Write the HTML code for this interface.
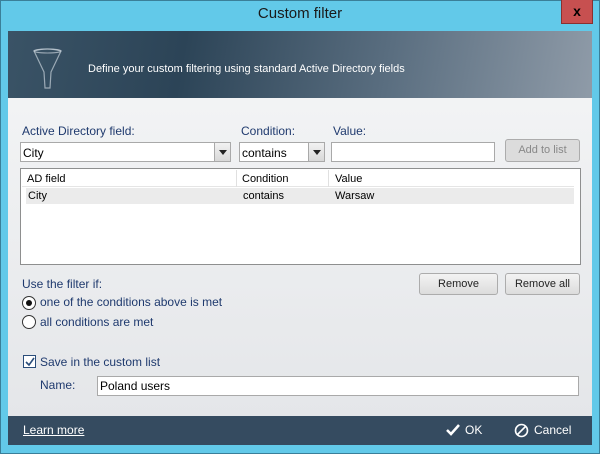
<!DOCTYPE html>
<html><head><style>
*{margin:0;padding:0;box-sizing:border-box}
body{width:600px;height:454px;background:#62c9e9;font-family:"Liberation Sans",sans-serif;font-size:12px;position:relative;overflow:hidden}
.frame{position:absolute;left:0;top:0;width:600px;height:454px;border:1px solid #3a7f99}
.title{position:absolute;left:0;top:5px;width:600px;text-align:center;font-size:15px;color:#1a1a1a}
.close{position:absolute;left:561px;top:0;width:32px;height:24px;background:#c75050;border:1px solid #8a3030;border-top:none;color:#000;font-weight:bold;text-align:center;line-height:22px;font-size:14px}
.content{position:absolute;left:8px;top:31px;width:584px;height:414px;background:linear-gradient(#f5f6f7,#e3e5e8)}
.header{position:absolute;left:8px;top:31px;width:584px;height:67px;background:linear-gradient(100deg,#3a5366 0%,#2c4457 30%,#5a6e80 65%,#8f9ba8 100%)}
.header span{position:absolute;left:80px;top:32px;color:#fff;font-size:11px}
.a{position:absolute}
.lbl{color:#1f3a6e;font-size:12px}
.box{background:#fff;border:1px solid #a9a9a9}
.dd{position:absolute;right:0;top:0;width:16px;height:18px;background:linear-gradient(#f2f2f2,#d8d8d8);border-left:1px solid #a9a9a9}
.dd:after{content:"";position:absolute;left:4px;top:7px;border:4px solid transparent;border-top:5px solid #222}
.btn{background:linear-gradient(#f3f3f3,#dcdcdc);border:1px solid #acacac;border-radius:3px;text-align:center;color:#222;font-size:11px}
.footer{position:absolute;left:8px;top:416px;width:584px;height:29px;background:#354b60;color:#fff}
</style></head><body>
<div class="frame"></div>
<div class="title">Custom filter</div>
<div class="close">x</div>
<div class="content"></div>
<div class="header"><svg class="a" style="left:25px;top:17px" width="40" height="46"><path d="M1 3 Q14 -1 28 3 L18 24 L17 40 L12 40 L11 24 Z" fill="none" stroke="#c8d2da" stroke-width="1.2" opacity=".7"/><ellipse cx="14.5" cy="3" rx="13.5" ry="2" fill="none" stroke="#c8d2da" opacity=".7"/></svg><span>Define your custom filtering using standard Active Directory fields</span></div>

<div class="a lbl" style="left:22px;top:124px">Active Directory field:</div>
<div class="a lbl" style="left:241px;top:124px">Condition:</div>
<div class="a lbl" style="left:333px;top:124px">Value:</div>
<div class="a box" style="left:20px;top:142px;width:211px;height:20px"><span class="a" style="left:2px;top:3px">City</span><div class="dd"></div></div>
<div class="a box" style="left:239px;top:142px;width:86px;height:20px"><span class="a" style="left:2px;top:3px">contains</span><div class="dd"></div></div>
<div class="a box" style="left:331px;top:142px;width:164px;height:20px"></div>
<div class="a btn" style="left:505px;top:139px;width:75px;height:23px;line-height:21px;color:#888;background:#dcdcdc">Add to list</div>

<div class="a box" style="left:20px;top:168px;width:561px;height:97px;border-color:#8e8f8f"></div>
<div class="a" style="left:22px;top:170px;width:552px;height:17px;background:#fff;border-bottom:1px solid #e5e5e5;font-size:11px">
<span class="a" style="left:5px;top:3px">AD field</span><span class="a" style="left:214px;top:0;height:17px;border-left:1px solid #e0e0e0"></span>
<span class="a" style="left:220px;top:3px">Condition</span><span class="a" style="left:306px;top:0;height:17px;border-left:1px solid #e0e0e0"></span>
<span class="a" style="left:313px;top:3px">Value</span></div>
<div class="a" style="left:26px;top:188px;width:548px;height:16px;background:#ebebeb;font-size:11px">
<span class="a" style="left:2px;top:2px">City</span><span class="a" style="left:217px;top:2px">contains</span><span class="a" style="left:309px;top:2px">Warsaw</span></div>

<div class="a lbl" style="left:22px;top:277px">Use the filter if:</div>
<div class="a btn" style="left:419px;top:273px;width:79px;height:22px;line-height:20px">Remove</div>
<div class="a btn" style="left:505px;top:273px;width:75px;height:22px;line-height:20px">Remove all</div>
<div class="a" style="left:22px;top:296px;width:14px;height:14px;border:1px solid #333;border-radius:50%;background:#fff"><div class="a" style="left:3px;top:3px;width:6px;height:6px;border-radius:50%;background:#111"></div></div>
<div class="a lbl" style="left:40px;top:295px">one of the conditions above is met</div>
<div class="a" style="left:22px;top:315px;width:14px;height:14px;border:1px solid #333;border-radius:50%;background:#fff"></div>
<div class="a lbl" style="left:40px;top:315px">all conditions are met</div>

<div class="a" style="left:23px;top:355px;width:13px;height:13px;border:1px solid #2a4d7a;background:#fff"><svg class="a" style="left:1px;top:1px" width="10" height="10"><path d="M1 5 L4 8 L9 1" fill="none" stroke="#2a4d7a" stroke-width="1.6"/></svg></div>
<div class="a lbl" style="left:40px;top:355px">Save in the custom list</div>
<div class="a lbl" style="left:40px;top:378px">Name:</div>
<div class="a box" style="left:97px;top:376px;width:482px;height:20px"><span class="a" style="left:2px;top:2px">Poland users</span></div>

<div class="footer">
<span class="a" style="left:15px;top:7px;text-decoration:underline;font-size:12px">Learn more</span>
<svg class="a" style="left:438px;top:8px" width="14" height="12"><path d="M1 6 L5 10 L13 1" fill="none" stroke="#fff" stroke-width="2.5"/></svg>
<span class="a" style="left:457px;top:7px">OK</span>
<svg class="a" style="left:506px;top:7px" width="15" height="15"><circle cx="7.5" cy="7.5" r="6" fill="none" stroke="#fff" stroke-width="1.6"/><path d="M3.5 11.5 L11.5 3.5" stroke="#fff" stroke-width="1.6"/></svg>
<span class="a" style="left:526px;top:7px">Cancel</span>
</div>
</body></html>
